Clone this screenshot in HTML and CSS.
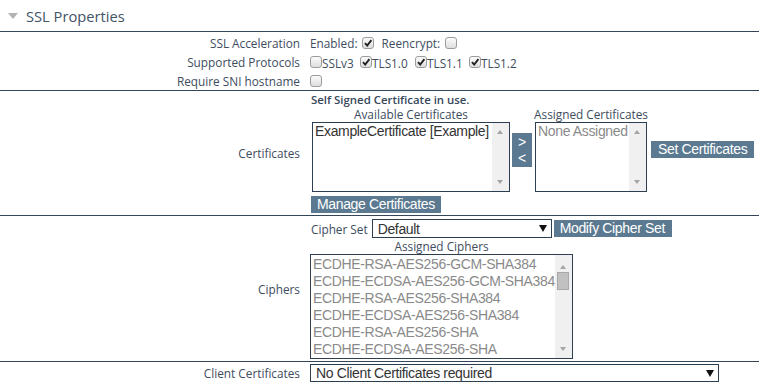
FILE: index.html
```html
<!DOCTYPE html>
<html>
<head>
<meta charset="utf-8">
<link rel="stylesheet" href="styles.css">
</head>
<body>
<div class="panel">
  <div class="header"><span class="tri"></span><span class="title">SSL Properties</span></div>

  <div class="group g1">
    <div class="label">SSL Acceleration</div>
    <div class="value">
      <span class="txt">Enabled:</span>
      <span class="cb on"><svg viewBox="0 0 12 12" width="12" height="12"><path d="M3 6.2 L5.2 8.6 L9.4 3.2" fill="none" stroke="#222" stroke-width="1.9"/></svg></span>
      <span class="txt gap">Reencrypt:</span>
      <span class="cb"></span>
    </div>
    <div class="label">Supported Protocols</div>
    <div class="value protos">
      <span class="proto"><span class="cb"></span><span class="txt low">SSLv3</span></span>
      <span class="proto"><span class="cb on"><svg viewBox="0 0 12 12" width="12" height="12"><path d="M3 6.2 L5.2 8.6 L9.4 3.2" fill="none" stroke="#222" stroke-width="1.9"/></svg></span><span class="txt low">TLS1.0</span></span>
      <span class="proto"><span class="cb on"><svg viewBox="0 0 12 12" width="12" height="12"><path d="M3 6.2 L5.2 8.6 L9.4 3.2" fill="none" stroke="#222" stroke-width="1.9"/></svg></span><span class="txt low">TLS1.1</span></span>
      <span class="proto"><span class="cb on"><svg viewBox="0 0 12 12" width="12" height="12"><path d="M3 6.2 L5.2 8.6 L9.4 3.2" fill="none" stroke="#222" stroke-width="1.9"/></svg></span><span class="txt low">TLS1.2</span></span>
    </div>
    <div class="label">Require SNI hostname</div>
    <div class="value"><span class="cb first"></span></div>
  </div>

  <div class="group g2">
    <div class="label">Certificates</div>
    <div class="value col">
      <div class="note">Self Signed Certificate in use.</div>
      <div class="certrow">
        <div class="listcol c1">
          <div class="cap">Available Certificates</div>
          <div class="listbox lb1">
            <div class="items"><div class="item dark">ExampleCertificate [Example]</div></div>
            <div class="sbar"><span class="up"></span><span class="dn"></span></div>
          </div>
        </div>
        <div class="movebtn"><span>&gt;</span><span>&lt;</span></div>
        <div class="listcol c2">
          <div class="cap">Assigned Certificates</div>
          <div class="listbox lb2">
            <div class="items"><div class="item grey">None Assigned</div></div>
            <div class="sbar"><span class="up"></span><span class="dn"></span></div>
          </div>
        </div>
        <div class="btn setbtn">Set Certificates</div>
      </div>
      <div class="btn managebtn">Manage Certificates</div>
    </div>
  </div>

  <div class="group g3">
    <div class="label">Ciphers</div>
    <div class="value col">
      <div class="cipherrow">
        <span class="txt">Cipher Set</span>
        <div class="dropdown dd1"><span class="ddtext">Default</span><svg class="ddarrow" viewBox="0 0 8 7" width="8" height="7"><path d="M0 0 H8 L4 7 Z" fill="#111"/></svg></div>
        <div class="btn modbtn">Modify Cipher Set</div>
      </div>
      <div class="listcol cw">
        <div class="cap">Assigned Ciphers</div>
        <div class="listbox lb3">
          <div class="items">
            <div class="item grey">ECDHE-RSA-AES256-GCM-SHA384</div>
            <div class="item grey">ECDHE-ECDSA-AES256-GCM-SHA384</div>
            <div class="item grey">ECDHE-RSA-AES256-SHA384</div>
            <div class="item grey">ECDHE-ECDSA-AES256-SHA384</div>
            <div class="item grey">ECDHE-RSA-AES256-SHA</div>
            <div class="item grey">ECDHE-ECDSA-AES256-SHA</div>
          </div>
          <div class="sbar"><span class="up"></span><span class="thumb"></span><span class="dn"></span></div>
        </div>
      </div>
    </div>
  </div>

  <div class="group g4">
    <div class="label">Client Certificates</div>
    <div class="value">
      <div class="dropdown dd2"><span class="ddtext">No Client Certificates required</span><svg class="ddarrow" viewBox="0 0 8 7" width="8" height="7"><path d="M0 0 H8 L4 7 Z" fill="#111"/></svg></div>
    </div>
  </div>
</div>
</body>
</html>
```

FILE: styles.css
```css
* { box-sizing: border-box; }
html, body { margin: 0; padding: 0; background: #fff; }
body {
  font-family: "Open Sans", "Noto Sans", sans-serif;
  font-size: 11.8px;
  color: #3d4d5e;
  width: 759px;
  height: 382px;
  overflow: hidden;
}
.header {
  height: 32px;
  border-bottom: 1px solid #34465a;
  display: flex;
  align-items: center;
  padding-left: 8px;
}
.tri {
  width: 0; height: 0;
  border-left: 5.5px solid transparent;
  border-right: 5.5px solid transparent;
  border-top: 6px solid #b3b3b3;
  margin-right: 8px;
  margin-top: 1px;
}
.title {
  font-size: 14.7px;
  color: #425366;
  line-height: 20px;
}
.group {
  display: grid;
  grid-template-columns: 300px 1fr;
  column-gap: 10px;
  border-bottom: 1px solid #34465a;
  align-items: center;
}
.label {
  text-align: right;
  white-space: nowrap;
}
.g1 { padding-top: 1px; grid-auto-rows: 19px; }
.value { display: flex; align-items: center; }
.value.col { flex-direction: column; align-items: flex-start; }
.txt { white-space: nowrap; }
.gap { margin-left: 7px; }
.low { position: relative; top: 1px; }
.cb {
  width: 12px; height: 12px;
  border: 1px solid #9c9c9c;
  border-radius: 3px;
  background: linear-gradient(#fbfbfb, #dedede);
  display: inline-flex;
  margin-left: 5px;
  flex: none;
}
.cb svg { margin: -1px; }
.protos .cb, .cb.first { margin-left: 0; }
.proto { display: inline-flex; align-items: center; }
.proto:nth-child(1) { width: 50px; }
.proto:nth-child(2) { width: 55px; }
.proto:nth-child(3) { width: 54px; }

.g2 { padding: 1px 0 2px; }
.note { font-weight: 600; font-size: 11.4px; line-height: 15px; margin-left: 1px; color: #37475a; }
.certrow { display: flex; align-items: center; margin-left: 2px; }
.listcol { display: flex; flex-direction: column; align-items: center; }
.c1 { width: 198px; }
.c2 { width: 112px; }
.cap { line-height: 15px; white-space: nowrap; }
.listbox {
  border: 1px solid #2c3e50;
  display: flex;
  background: #fff;
  font-family: "Liberation Sans", Arial, sans-serif;
  font-size: 14px;
  letter-spacing: -0.35px;
}
.lb1 { width: 198px; height: 70px; }
.lb2 { width: 112px; height: 70px; }
.items { flex: 1; padding: 0 0 0 2px; overflow: hidden; }
.item { line-height: 16px; white-space: nowrap; }
.dark { color: #333; }
.grey { color: #8a8a8a; }
.sbar {
  width: 17px;
  background: #f0f0f0;
  position: relative;
  flex: none;
}
.up, .dn {
  position: absolute;
  left: 5px;
  width: 0; height: 0;
  border-left: 3.5px solid transparent;
  border-right: 3.5px solid transparent;
}
.up { top: 7px; border-bottom: 4px solid #a3a3a3; }
.dn { bottom: 7px; border-top: 4px solid #a3a3a3; }
.thumb {
  position: absolute;
  left: 2px; top: 17px;
  width: 12px; height: 18px;
  background: #c1c1c1;
  border: 1px solid #a9a9a9;
}
.movebtn {
  width: 20px; height: 34px;
  background: #5b7a91;
  color: #fff;
  display: flex; flex-direction: column; align-items: center; justify-content: center;
  font-family: "Liberation Sans", Arial, sans-serif;
  font-size: 14px;
  line-height: 16px;
  margin: 0 3px 0 2px;
}
.btn {
  background: #5b7a91;
  color: #fff;
  font-family: "Liberation Sans", Arial, sans-serif;
  font-size: 14px;
  letter-spacing: -0.35px;
  line-height: 17px;
  height: 17px;
  padding: 0 6px;
  white-space: nowrap;
}
.setbtn { margin-left: 4px; padding: 0 7px 0 7px; }
.managebtn { margin-top: 4px; margin-left: 1px; }

.g3 { padding: 3px 0 2px; }
.cipherrow { display: flex; align-items: center; margin-left: 1px; }
.dropdown {
  border: 1px solid #2c3e50;
  background: #fff;
  display: flex;
  align-items: center;
  justify-content: space-between;
  font-family: "Liberation Sans", Arial, sans-serif;
  font-size: 14px;
  letter-spacing: -0.35px;
  color: #333;
  padding: 0 4px 0 5px;
}
.dd1 { width: 180px; height: 19px; margin-left: 4px; }
.dd2 { width: 409px; height: 18px; margin-top: 2px; margin-bottom: 2px; }
.ddarrow { flex: none; }
.modbtn { margin-left: 2px; padding: 0 7px 0 6px; }
.cw { margin-top: 1px; width: 263px; }
.cw .cap { line-height: 15px; }
.lb3 { width: 263px; height: 105px; }
.lb3 .items { padding-top: 1px; }
.lb3 .item { line-height: 17px; }
.lb3 .up { top: 10px; }

.g4 { border-bottom: none; }
```
